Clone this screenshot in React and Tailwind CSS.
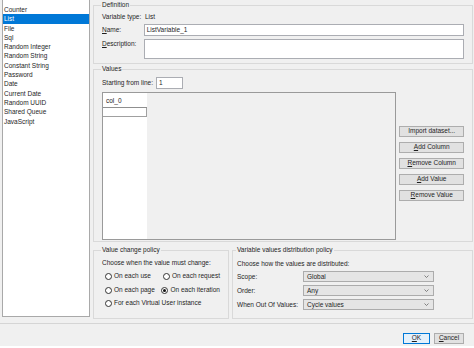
import React from 'react';

const items = [
  'Counter',
  'List',
  'File',
  'Sql',
  'Random Integer',
  'Random String',
  'Constant String',
  'Password',
  'Date',
  'Current Date',
  'Random UUID',
  'Shared Queue',
  'JavaScript',
];

function Mn({ c, rest }) {
  return (
    <>
      <span className="underline underline-offset-[1px]">{c}</span>
      {rest}
    </>
  );
}

function Group({ title, className = '', children }) {
  return (
    <fieldset className={`border border-[#d9d9d9] px-[8px] min-w-0 ${className}`}>
      <legend className="px-[1px] -ml-[1px] leading-[10px]">{title}</legend>
      {children}
    </fieldset>
  );
}

function Btn({ children, className = '' }) {
  return (
    <div
      className={`h-[11px] flex items-center justify-center bg-[#e1e1e1] border border-[#adadad] leading-none ${className}`}
    >
      {children}
    </div>
  );
}

function Radio({ checked, label, className = '' }) {
  return (
    <div className={`flex items-center h-[8px] ${className}`}>
      <span className="w-[7px] h-[7px] rounded-full border border-[#333] bg-white flex items-center justify-center shrink-0">
        {checked ? <span className="w-[3px] h-[3px] rounded-full bg-[#111]" /> : null}
      </span>
      <span className="ml-[2px] whitespace-nowrap">{label}</span>
    </div>
  );
}

function Select({ value }) {
  return (
    <div className="w-[131px] h-[11px] bg-[#e5e5e5] border border-[#acacac] flex items-center justify-between pl-[3px] pr-[4px]">
      <span>{value}</span>
      <svg width="5" height="3" viewBox="0 0 5 3" className="text-[#666]">
        <path d="M0.5 0.5 L2.5 2.5 L4.5 0.5" fill="none" stroke="currentColor" strokeWidth="0.8" />
      </svg>
    </div>
  );
}

export default function App() {
  return (
    <div className="w-[474px] h-[348px] bg-[#f0f0f0] overflow-hidden flex flex-col text-[6.5px] text-[#1e1e1e] font-['Liberation_Sans',Arial,sans-serif]">
      <div className="flex h-[319px] shrink-0">
        {/* type list */}
        <div className="ml-[2px] w-[88px] h-[317px] bg-white border-x border-b border-[#a9a9a9] pt-[5px]">
          {items.map((it) => (
            <div
              key={it}
              className={`h-[9.3px] leading-[9.3px] pl-[1px] whitespace-nowrap ${
                it === 'List' ? 'bg-[#0078d7] text-white' : ''
              }`}
            >
              {it}
            </div>
          ))}
        </div>

        <div className="ml-[3px] w-[380px] flex flex-col">
          <Group title="Definition" className="h-[64px]">
            <div className="mt-[3px] h-[8px] leading-[8px]">Variable type:&nbsp; List</div>
            <div className="mt-[3px] flex items-center h-[12px]">
              <div className="w-[42px]">
                <Mn c="N" rest="ame:" />
              </div>
              <div className="w-[323px] h-[12px] bg-white border border-[#abadb3] pl-[2px] flex items-center">
                ListVariable_1
              </div>
            </div>
            <div className="mt-[3px] flex h-[20px]">
              <div className="w-[42px]">
                <Mn c="D" rest="escription:" />
              </div>
              <div className="w-[323px] h-[20px] bg-white border border-[#abadb3]" />
            </div>
          </Group>

          <Group title="Values" className="h-[178px]">
            <div className="mt-[3px] flex items-center h-[12px]">
              <div className="w-[54px] whitespace-nowrap">Starting from line:</div>
              <div className="w-[27px] h-[12px] bg-white border border-[#abadb3] pl-[2px] flex items-center">1</div>
            </div>
            <div className="mt-[3px] flex">
              <div className="w-[296px] h-[148px] border border-[#9a9a9a] bg-[#f0f0f0] flex">
                <div className="w-[44px] h-full bg-white">
                  <div className="h-[15px] border-b border-[#8f8f8f] pl-[3px] pt-[4px] leading-[8px]">col_0</div>
                  <div className="h-[9px] border-b border-r border-[#a0a0a0]" />
                </div>
              </div>
              <div className="ml-[3px] w-[65px] pt-[34px] flex flex-col gap-[5px]">
                <Btn>Import dataset...</Btn>
                <Btn>
                  <Mn c="A" rest="dd Column" />
                </Btn>
                <Btn>
                  <Mn c="R" rest="emove Column" />
                </Btn>
                <Btn>
                  <Mn c="A" rest="dd Value" />
                </Btn>
                <Btn>
                  <Mn c="R" rest="emove Value" />
                </Btn>
              </div>
            </div>
          </Group>

          <div className="flex mt-[3px] gap-[3px]">
            <Group title="Value change policy" className="w-[136px] h-[74px]">
              <div className="mt-[4px] h-[8px] leading-[8px] whitespace-nowrap">Choose when the value must change:</div>
              <div className="flex mt-[5px] pl-[3px]">
                <Radio label="On each use" className="w-[60px]" />
                <Radio label="On each request" />
              </div>
              <div className="flex mt-[6px] pl-[3px]">
                <Radio label="On each page" className="w-[60px]" />
                <Radio label="On each iteration" checked />
              </div>
              <div className="flex mt-[5px] pl-[3px]">
                <Radio label="For each Virtual User instance" />
              </div>
            </Group>

            <Group title="Variable values distribution policy" className="w-[241px] h-[74px] !px-[4px]">
              <div className="mt-[5px] h-[8px] leading-[8px] whitespace-nowrap">Choose how the values are distributed:</div>
              <div className="mt-[3px] flex items-center">
                <div className="w-[66px]">Scope:</div>
                <Select value="Global" />
              </div>
              <div className="mt-[3px] flex items-center">
                <div className="w-[66px]">Order:</div>
                <Select value="Any" />
              </div>
              <div className="mt-[3px] flex items-center">
                <div className="w-[66px] whitespace-nowrap">When Out Of Values:</div>
                <Select value="Cycle values" />
              </div>
            </Group>
          </div>
        </div>
      </div>

      <div className="mt-[4px] h-px bg-[#d5d5d5] shrink-0" />
      <div className="mt-[9px] flex justify-end pr-[10px] gap-[4px] shrink-0">
        <Btn className="w-[27px] !border-[#0078d7] bg-[#e5f1fb]">
          <Mn c="O" rest="K" />
        </Btn>
        <Btn className="w-[30px]">
          <Mn c="C" rest="ancel" />
        </Btn>
      </div>
      <div className="mt-auto h-[2px] bg-white" />
    </div>
  );
}
